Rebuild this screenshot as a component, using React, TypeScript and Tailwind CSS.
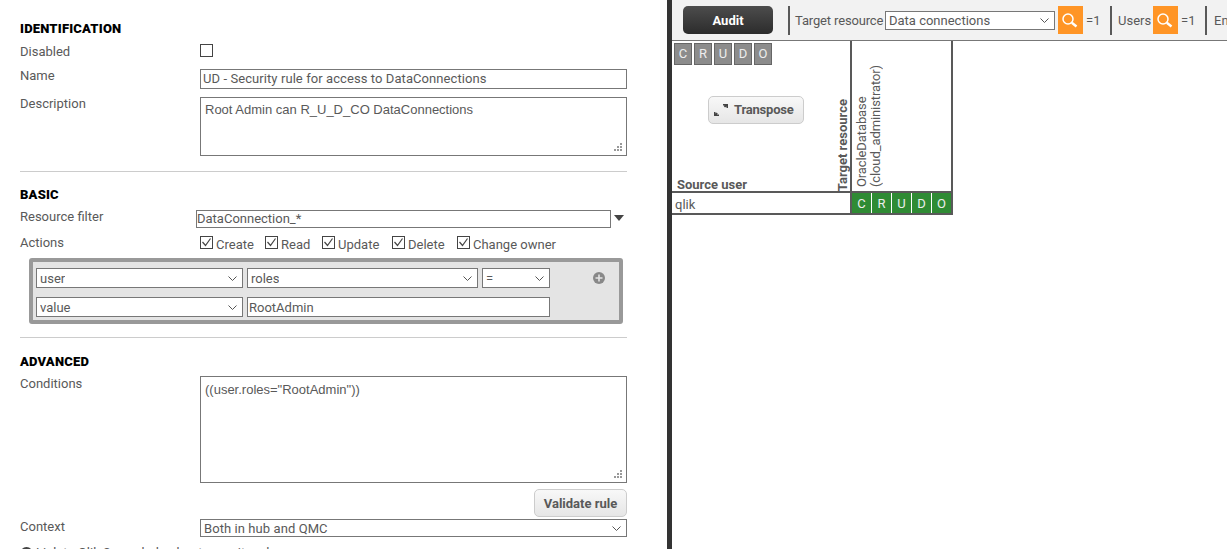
const font = "font-['Roboto','Liberation_Sans',sans-serif]";
const areaFont = "font-['Liberation_Sans',sans-serif] text-[13px]";

function Chevron() {
  return (
    <svg width="9" height="5" viewBox="0 0 9 5" fill="none" className="shrink-0">
      <path d="M.5.5l4 4 4-4" stroke="#555" strokeWidth="1" />
    </svg>
  );
}

function Select({ label, className, textClass = "" }: { label: string; className: string; textClass?: string }) {
  return (
    <div className={`flex shrink-0 items-center justify-between border border-[#777] bg-white pl-[3px] pr-[5px] ${className}`}>
      <span className={`truncate ${textClass}`}>{label}</span>
      <Chevron />
    </div>
  );
}

function Grip() {
  return (
    <svg width="9" height="9" viewBox="0 0 9 9" className="absolute bottom-[3px] right-[3px]" fill="#999">
      <rect x="6" y="0" width="2" height="2" />
      <rect x="3" y="3" width="2" height="2" />
      <rect x="6" y="3" width="2" height="2" />
      <rect x="0" y="6" width="2" height="2" />
      <rect x="3" y="6" width="2" height="2" />
      <rect x="6" y="6" width="2" height="2" />
    </svg>
  );
}

function Check({ checked = true }: { checked?: boolean }) {
  return (
    <span className="flex h-[13px] w-[13px] shrink-0 items-center justify-center border border-[#444] bg-white">
      {checked && (
        <svg width="11" height="11" viewBox="0 0 11 11" fill="none">
          <path d="M1.5 5l3 3.5 5-7" stroke="#444" strokeWidth="1.2" />
        </svg>
      )}
    </span>
  );
}

function Action({ label, className }: { label: string; className: string }) {
  return (
    <div className={`flex items-start gap-[3px] ${className}`}>
      <Check />
      <span className="mt-px leading-[15px]">{label}</span>
    </div>
  );
}

function Heading({ children }: { children: string }) {
  return <h3 className="text-[13px] leading-4 font-black tracking-[0.2px] text-black">{children}</h3>;
}

function Crudo({ className }: { className: string }) {
  return (
    <>
      {["C", "R", "U", "D", "O"].map((l) => (
        <span key={l} className={`flex items-center justify-center text-[13px] ${className}`}>
          {l}
        </span>
      ))}
    </>
  );
}

function RuleForm() {
  return (
    <div className="h-full w-[667px] shrink-0 overflow-hidden bg-white pl-5 text-[13px] text-[#595959]">
      <div className="w-[607px] pt-[21px]">
        <Heading>IDENTIFICATION</Heading>
        <div className="mt-[7px] flex h-[13px] items-center">
          <span className="w-[180px] translate-y-px">Disabled</span>
          <Check checked={false} />
        </div>
        <div className="mt-3 flex h-5">
          <span className="w-[180px] leading-[14px]">Name</span>
          <div className="flex-1 border border-[#777] pl-[2px] leading-[18px] tracking-[0.08px]">UD - Security rule for access to DataConnections</div>
        </div>
        <div className="mt-2 flex h-[59px]">
          <span className="w-[180px] leading-[14px]">Description</span>
          <div className={`relative flex-1 border border-[#777] pt-[4px] pl-1 leading-[16px] ${areaFont}`}>
            Root Admin can R_U_D_CO DataConnections
            <Grip />
          </div>
        </div>
        <hr className="mt-[15px] border-[#ccc]" />

        <div className="mt-[15px]">
          <Heading>BASIC</Heading>
        </div>
        <div className="mt-[7px] flex h-[18px]">
          <span className="w-[176px] leading-[14px]">Resource filter</span>
          <div className="w-[415px] border border-[#777] leading-[16px]">DataConnection_*</div>
          <span className="ml-[3px] mt-[5px] h-0 w-0 border-x-[5px] border-t-[6px] border-x-transparent border-t-[#444]" />
        </div>
        <div className="mt-2 flex h-[15px]">
          <span className="w-[180px] leading-[14px]">Actions</span>
          <Action label="Create" className="w-[65px]" />
          <Action label="Read" className="w-[57px]" />
          <Action label="Update" className="w-[70px]" />
          <Action label="Delete" className="w-[65px]" />
          <Action label="Change owner" className="flex-1" />
        </div>

        <div className="mt-[7px] ml-[9px] h-[66px] w-[594px] rounded-[3px] border-4 border-[#999] bg-[#e4e4e4] pt-[6px] pl-[3px]">
          <div className="flex h-5">
            <Select label="user" className="w-[207px]" textClass="translate-y-px" />
            <Select label="roles" className="ml-1 w-[231px]" textClass="translate-y-px" />
            <Select label="=" className="ml-1 w-[68px]" textClass="translate-y-px" />
            <svg width="12" height="12" viewBox="0 0 12 12" className="ml-[43px] mt-1">
              <circle cx="6" cy="6" r="6" fill="#888" />
              <path d="M6 2.5v7M2.5 6h7" stroke="#e4e4e4" strokeWidth="1.6" />
            </svg>
          </div>
          <div className="mt-[9px] flex h-5">
            <Select label="value" className="w-[207px]" textClass="translate-y-px" />
            <div className="ml-1 w-[303px] border border-[#777] bg-white pl-px leading-[19px]">RootAdmin</div>
          </div>
        </div>
        <hr className="mt-[13px] border-[#ccc]" />

        <div className="mt-4">
          <Heading>ADVANCED</Heading>
        </div>
        <div className="mt-[6px] flex h-[107px]">
          <span className="w-[180px] pt-px leading-[14px]">Conditions</span>
          <div className={`relative flex-1 border border-[#777] pt-[5px] pl-1 leading-[16px] ${areaFont}`}>
            ((user.roles="RootAdmin"))
            <Grip />
          </div>
        </div>
        <div className="mt-[6px] flex justify-end">
          <button className="h-7 w-[93px] rounded-[5px] border border-[#ccc] bg-linear-to-b from-[#f8f8f8] to-[#e6e6e6] pt-px text-[13px] font-bold text-[#595959]">
            Validate rule
          </button>
        </div>
        <div className="mt-[2px] flex h-[18px]">
          <span className="w-[180px] pt-px leading-[14px]">Context</span>
          <Select label="Both in hub and QMC" className="flex-1 leading-[16px] tracking-[0.08px]" textClass="translate-y-px" />
        </div>
        <div className="mt-[8px] flex items-center gap-[3px] leading-4">
          <span className="h-[13px] w-[13px] rounded-full bg-[#444]" />
          <span>Link to Qlik Sense help about security rules</span>
        </div>
      </div>
    </div>
  );
}

function Divider({ className }: { className: string }) {
  return <span className={`h-[29px] w-[2px] shrink-0 bg-[#595959] ${className}`} />;
}

function Find({ className }: { className: string }) {
  return (
    <span className={`h-7 w-[25px] shrink-0 bg-[#ff9526] ${className}`}>
      <svg width="25" height="28" viewBox="0 0 25 28" fill="none">
        <circle cx="10" cy="13" r="5" stroke="#fff" strokeWidth="1.5" />
        <path d="M13.8 16.8L18.5 20.5" stroke="#fff" strokeWidth="2.4" />
      </svg>
    </span>
  );
}

function Toolbar() {
  return (
    <div className="flex h-[41px] items-center overflow-hidden border-b border-[#777] bg-[#f2f2f2] pl-[11px] whitespace-nowrap">
      <button className="h-7 w-[90px] shrink-0 rounded-[5px] bg-linear-to-b from-[#4d4d4d] to-[#2c2c2c] pt-px text-[13px] font-bold text-white">
        Audit
      </button>
      <Divider className="ml-[15px]" />
      <span className="ml-[5px] w-[88px] shrink-0 pt-px tracking-[-0.15px]">Target resource</span>
      <Select label="Data connections" className="ml-[2px] h-[19px] w-[170px] leading-[17px]" />
      <Find className="ml-[3px]" />
      <span className="ml-[3px] w-[24px] shrink-0 pt-px">=1</span>
      <Divider className="ml-0" />
      <span className="ml-[6px] w-[33px] shrink-0 pt-px">Users</span>
      <Find className="ml-[2px]" />
      <span className="ml-[3px] w-[24px] shrink-0 pt-px">=1</span>
      <Divider className="ml-0" />
      <span className="ml-[7px] shrink-0 pt-px">Environment</span>
    </div>
  );
}

function Matrix() {
  return (
    <div className="grid w-[281px] grid-cols-[180px_99px] grid-rows-[152px_22px] border-r-2 border-[#595959]">
      <div className="relative flex flex-col border-r-2 border-b-2 border-[#595959] pt-[2px] pl-[2px]">
        <div className="flex gap-[2px]">
          <Crudo className="h-[22px] w-[18px] border border-[#666] bg-[#8c8c8c] text-[#eee]" />
        </div>
        <button className="mt-[31px] ml-[34px] flex h-7 w-[96px] items-center gap-[6px] rounded-[5px] border border-[#ccc] bg-linear-to-b from-[#f8f8f8] to-[#e6e6e6] pl-[5px] font-bold tracking-[-0.2px] text-[#595959]">
          <svg width="14" height="12" viewBox="0 0 14 12" fill="#444">
            <path d="M9 0h5v4h-1.5V2.5L11 3.5 9.8 2.2 10.5 1.5H9zM0 12V8h1.5v1.5l1.2-1 1.1 1.2-.9.8H5V12z" />
          </svg>
          Transpose
        </button>
        <span className="absolute bottom-[-2px] left-[5px] text-[13px] font-bold leading-4">Source user</span>
        <span className="absolute right-0 bottom-0 rotate-180 text-[13px] font-bold leading-[14px] [writing-mode:vertical-rl]">
          Target resource
        </span>
      </div>
      <div className="flex items-end border-b-2 border-[#595959] pb-[4px] pl-[3px]">
        <span className="rotate-180 leading-[14px] tracking-[-0.1px] [writing-mode:vertical-rl]">
          OracleDatabase
          <br />
          (cloud_administrator)
        </span>
      </div>
      <div className="flex items-center border-r-2 border-b-2 border-[#595959] pt-[3px] pl-[3px]">qlik</div>
      <div className="flex gap-px border-b-2 border-[#595959]">
        <Crudo className="w-[19px] bg-[#2f8b34] pt-px text-[#eee]" />
      </div>
    </div>
  );
}

export default function App() {
  return (
    <div className={`flex h-[549px] w-[1227px] overflow-hidden bg-white ${font}`}>
      <RuleForm />
      <div className="w-[5px] shrink-0 bg-[#333]" />
      <div className="min-w-0 flex-1 text-[13px] text-[#595959]">
        <Toolbar />
        <Matrix />
      </div>
    </div>
  );
}
